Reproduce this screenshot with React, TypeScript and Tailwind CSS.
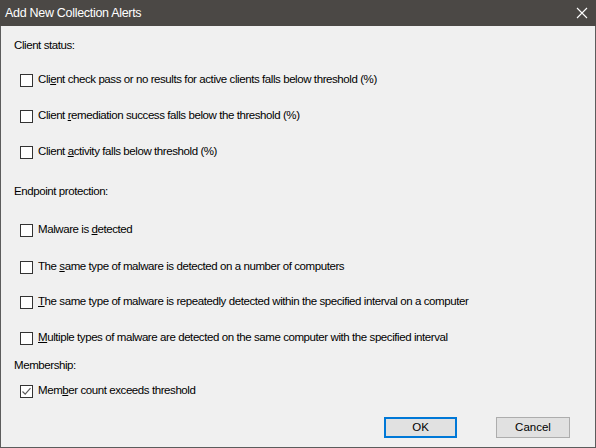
import React from "react";

const font = { fontFamily: '"Segoe UI", "Liberation Sans", Arial, sans-serif' };

function CheckBox({ checked }: { checked?: boolean }) {
  return (
    <span className="flex h-[13px] w-[13px] shrink-0 items-center justify-center border border-[#333333] bg-white">
      {checked ? (
        <svg width="11" height="11" viewBox="0 0 11 11">
          <path d="M1.5 5.5 L4.2 8.2 L9.5 2.2" fill="none" stroke="#5a5a5a" strokeWidth="1.2" />
        </svg>
      ) : null}
    </span>
  );
}

function Row({ label, checked, className }: { label: React.ReactNode; checked?: boolean; className: string }) {
  return (
    <div className={`flex h-[20px] items-center gap-[5px] pl-[19px] ${className}`}>
      <CheckBox checked={checked} />
      <span className="whitespace-nowrap">{label}</span>
    </div>
  );
}

function Heading({ text, className }: { text: string; className: string }) {
  return <div className={`flex h-[20px] items-center pl-[13px] ${className}`}>{text}</div>;
}

export default function App() {
  return (
    <div
      className="flex h-[448px] w-[596px] flex-col border border-t-0 border-[#5c5c5c] bg-[#f0f0f0] text-[11.5px] tracking-[-0.42px] text-black"
      style={font}
    >
      <div className="-mx-px flex h-[26px] shrink-0 items-center justify-between bg-[#4b4845] pl-[5px] pr-[8px] text-[12.5px] tracking-[-0.3px] text-white">
        <span>Add New Collection Alerts</span>
        <svg width="12" height="12" viewBox="0 0 12 12">
          <path d="M1 1 L11 11 M11 1 L1 11" stroke="#ffffff" strokeWidth="1.1" />
        </svg>
      </div>

      <div className="flex flex-1 flex-col">
        <Heading text="Client status:" className="mt-[10px]" />
        <Row
          className="mt-[14px]"
          label={
            <>
              Cli<u>e</u>nt check pass or no results for active clients falls below threshold (%)
            </>
          }
        />
        <Row
          className="mt-[16px]"
          label={
            <>
              Client <u>r</u>emediation success falls below the threshold (%)
            </>
          }
        />
        <Row
          className="mt-[16px]"
          label={
            <>
              Client <u>a</u>ctivity falls below threshold (%)
            </>
          }
        />

        <Heading text="Endpoint protection:" className="mt-[20px]" />
        <Row
          className="mt-[18px]"
          label={
            <>
              Malware is <u>d</u>etected
            </>
          }
        />
        <Row
          className="mt-[17px]"
          label={
            <>
              The <u>s</u>ame type of malware is detected on a number of computers
            </>
          }
        />
        <Row
          className="mt-[15px]"
          label={
            <>
              <u>T</u>he same type of malware is repeatedly detected within the specified interval on a computer
            </>
          }
        />
        <Row
          className="mt-[16px]"
          label={
            <>
              <u>M</u>ultiple types of malware are detected on the same computer with the specified interval
            </>
          }
        />

        <Heading text="Membership:" className="mt-[8px]" />
        <Row
          checked
          className="mt-[5px]"
          label={
            <>
              Mem<u>b</u>er count exceeds threshold
            </>
          }
        />

        <div className="mt-[16px] flex justify-end gap-[39px] pr-[25px]">
          <button className="h-[21px] w-[73px] border-2 border-[#0078d7] bg-[#e1e1e1] tracking-normal">OK</button>
          <button className="h-[21px] w-[74px] border border-[#adadad] bg-[#e1e1e1] tracking-normal">Cancel</button>
        </div>
      </div>
    </div>
  );
}
